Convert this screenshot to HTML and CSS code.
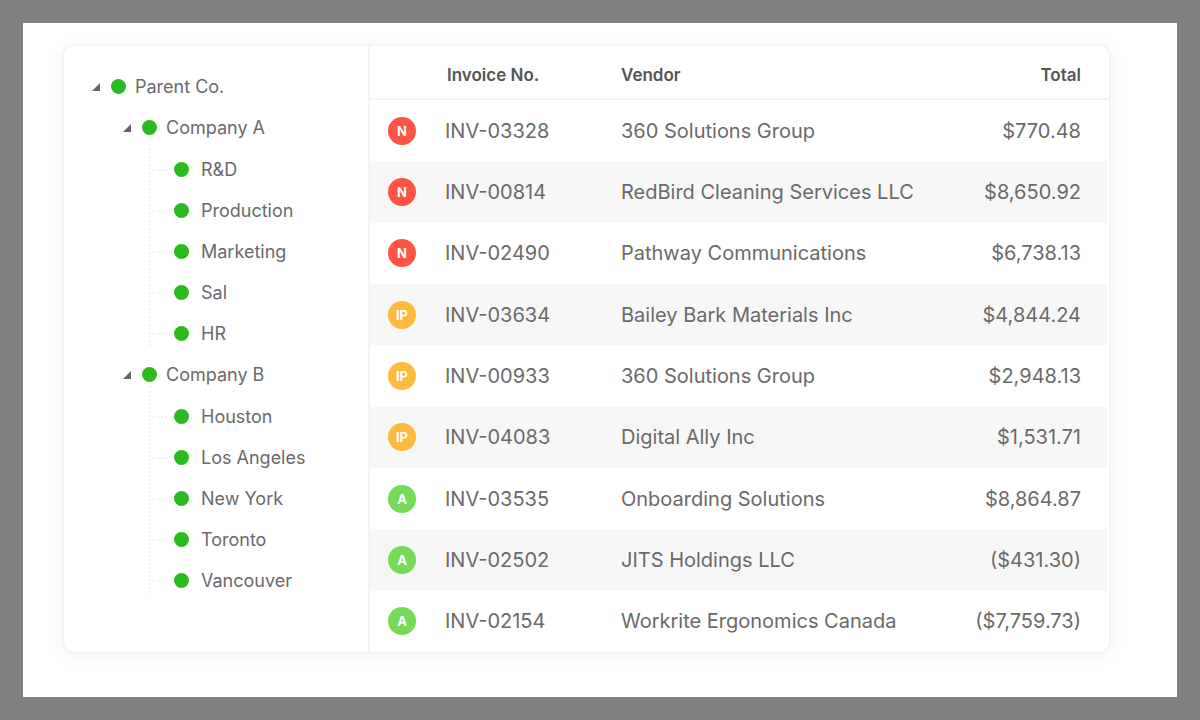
FILE: index.html
```html
<!DOCTYPE html>
<html lang="en">
<head>
<meta charset="utf-8">
<title>Invoices</title>
<meta name="viewport" content="width=device-width, initial-scale=1">
<link rel="stylesheet" href="styles.css">
</head>
<body>
<main class="page">
  <section class="card">
    <nav class="sidebar" aria-label="Companies">
      <ul class="tree">
        <li>
          <div class="node"><button class="toggle" aria-label="Collapse Parent Co." aria-expanded="true"><svg viewBox="0 0 10 10"><path d="M9 1V9H1Z"/></svg></button><span class="dot"></span><span class="label">Parent Co.</span></div>
          <ul class="companies">
            <li>
              <div class="node"><button class="toggle" aria-label="Collapse Company A" aria-expanded="true"><svg viewBox="0 0 10 10"><path d="M9 1V9H1Z"/></svg></button><span class="dot"></span><span class="label">Company A</span></div>
              <ul class="units">
                <li class="node"><span class="dot"></span><span class="label">R&amp;D</span></li>
                <li class="node"><span class="dot"></span><span class="label">Production</span></li>
                <li class="node"><span class="dot"></span><span class="label">Marketing</span></li>
                <li class="node"><span class="dot"></span><span class="label">Sal</span></li>
                <li class="node"><span class="dot"></span><span class="label">HR</span></li>
              </ul>
            </li>
            <li>
              <div class="node"><button class="toggle" aria-label="Collapse Company B" aria-expanded="true"><svg viewBox="0 0 10 10"><path d="M9 1V9H1Z"/></svg></button><span class="dot"></span><span class="label">Company B</span></div>
              <ul class="units">
                <li class="node"><span class="dot"></span><span class="label">Houston</span></li>
                <li class="node"><span class="dot"></span><span class="label">Los Angeles</span></li>
                <li class="node"><span class="dot"></span><span class="label">New York</span></li>
                <li class="node"><span class="dot"></span><span class="label">Toronto</span></li>
                <li class="node"><span class="dot"></span><span class="label">Vancouver</span></li>
              </ul>
            </li>
          </ul>
        </li>
      </ul>
    </nav>
    <div class="content">
      <table class="invoices">
        <thead>
          <tr><th class="status" aria-label="Status"></th><th class="number">Invoice No.</th><th class="vendor">Vendor</th><th class="total">Total</th></tr>
        </thead>
        <tbody>
          <tr><td class="status"><span class="badge new">N</span></td><td>INV-03328</td><td>360 Solutions Group</td><td class="total">$770.48</td></tr>
          <tr><td class="status"><span class="badge new">N</span></td><td>INV-00814</td><td>RedBird Cleaning Services LLC</td><td class="total">$8,650.92</td></tr>
          <tr><td class="status"><span class="badge new">N</span></td><td>INV-02490</td><td>Pathway Communications</td><td class="total">$6,738.13</td></tr>
          <tr><td class="status"><span class="badge progress">IP</span></td><td>INV-03634</td><td>Bailey Bark Materials Inc</td><td class="total">$4,844.24</td></tr>
          <tr><td class="status"><span class="badge progress">IP</span></td><td>INV-00933</td><td>360 Solutions Group</td><td class="total">$2,948.13</td></tr>
          <tr><td class="status"><span class="badge progress">IP</span></td><td>INV-04083</td><td>Digital Ally Inc</td><td class="total">$1,531.71</td></tr>
          <tr><td class="status"><span class="badge approved">A</span></td><td>INV-03535</td><td>Onboarding Solutions</td><td class="total">$8,864.87</td></tr>
          <tr><td class="status"><span class="badge approved">A</span></td><td>INV-02502</td><td>JITS Holdings LLC</td><td class="total">($431.30)</td></tr>
          <tr><td class="status"><span class="badge approved">A</span></td><td>INV-02154</td><td>Workrite Ergonomics Canada</td><td class="total">($7,759.73)</td></tr>
        </tbody>
      </table>
    </div>
  </section>
</main>
</body>
</html>
```
FILE: styles.css
```css
* {
  box-sizing: border-box;
}

body {
  margin: 0;
  min-height: 100vh;
  padding: 23px;
  display: grid;
  background: #808080;
  color: #6a6a6a;
  font-family: Inter, "Liberation Sans", sans-serif;
}

.page {
  display: grid;
  padding: 21px 66px 43px 39px;
  background: #fff;
}

.card {
  display: grid;
  grid-template-columns: 306px 1fr;
  overflow: hidden;
  border: 2px solid #f4f4f4;
  border-radius: 12px;
  box-shadow: 0 2px 16px 2px rgba(0, 0, 0, 0.04);
}

.sidebar {
  padding: 20px 0 0 27px;
  border-right: 2px solid #f4f4f4;
}

ul {
  margin: 0;
  padding: 0;
  list-style: none;
}

.node {
  display: flex;
  align-items: center;
  height: 41px;
  font-size: 18px;
  line-height: 24px;
}

.companies {
  padding-left: 31px;
}

.toggle {
  display: flex;
  width: 10px;
  height: 10px;
  margin-right: 10px;
  padding: 0;
  border: 0;
  background: none;
}

.toggle svg {
  width: 10px;
  height: 10px;
  fill: #666;
}

.dot {
  width: 15px;
  height: 15px;
  margin-right: 9px;
  border-radius: 50%;
  background: #2bbb1f;
}

.units {
  position: relative;
  margin-top: 1px;
  padding-left: 28px;
}

.units::before {
  content: "";
  position: absolute;
  top: -10px;
  bottom: 8px;
  left: 27px;
  border-left: 2px dotted #f2f2f2;
}

.units .node::before {
  content: "";
  width: 15px;
  margin: 0 7px 0 2px;
  border-top: 2px dotted #f2f2f2;
}

.units .dot {
  margin-right: 12px;
}

.invoices {
  width: 100%;
  height: 100%;
  border-spacing: 0;
  font-size: 20px;
  line-height: 24px;
}

th,
td {
  padding: 0;
  text-align: left;
}

th {
  height: 54px;
  padding-top: 6px;
  border-bottom: 2px solid #f4f4f4;
  color: #555;
  font-size: 17px;
  font-weight: 600;
}

tbody tr:nth-child(even) {
  background: #f7f7f7;
}

.status {
  width: 75px;
  padding-left: 18px;
}

.number {
  width: 176px;
  padding-left: 2px;
}

th.total {
  padding-right: 28px;
}

.total {
  padding-right: 26px;
  text-align: right;
}

td.total {
  border-right: 2px solid #fff;
}

.badge {
  display: flex;
  align-items: center;
  justify-content: center;
  width: 28px;
  height: 28px;
  border-radius: 50%;
  color: #fff;
  font-size: 13px;
  font-weight: 700;
  line-height: 16px;
}

.new {
  background: #ff5343;
}

.progress {
  background: #ffb93e;
}

.approved {
  background: #77da59;
}
```
